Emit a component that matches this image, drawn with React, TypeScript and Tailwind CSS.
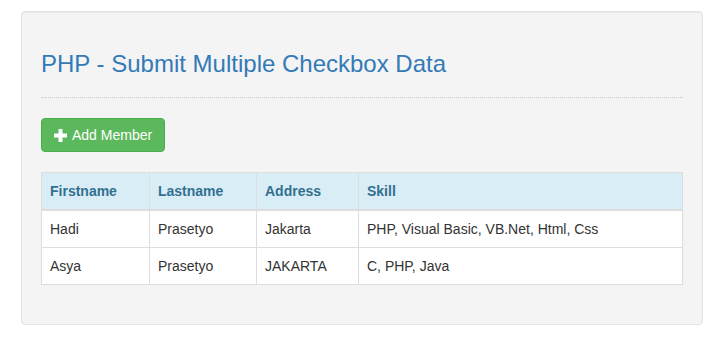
export default function App() {
  const rows = [
    ["Hadi", "Prasetyo", "Jakarta", "PHP, Visual Basic, VB.Net, Html, Css"],
    ["Asya", "Prasetyo", "JAKARTA", "C, PHP, Java"],
  ];
  return (
    <div className="bg-white min-h-[340px] pt-[11px] pl-[21px]" style={{ fontFamily: '"Liberation Sans", Arial, sans-serif' }}>
      <div className="w-[682px] bg-[#f4f4f4] border border-[#e3e3e3] rounded-[4px] p-[19px] shadow-[inset_0_1px_1px_rgba(0,0,0,0.05)] text-[14px] text-[#333] leading-[20px]">
        <h3 className="mt-[20px] text-[24px] leading-[26.4px] text-[#337ab7] font-normal">PHP - Submit Multiple Checkbox Data</h3>
        <hr className="mt-[20px] mb-[20px] border-0 border-t border-dotted border-[#c8c8c8]" />
        <button className="flex items-center h-[34px] px-[12px] bg-[#5cb85c] border border-[#4cae4c] rounded-[4px] text-white text-[14px]">
          <svg width="13" height="13" viewBox="0 0 13 13" className="mr-[5px]">
            <rect x="0" y="4.5" width="13" height="4" fill="#fff" />
            <rect x="4.5" y="0" width="4" height="13" fill="#fff" />
          </svg>
          Add Member
        </button>
        <table className="mt-[20px] mb-[20px] w-[642px] border-collapse border border-[#ddd] bg-white table-fixed">
          <thead>
            <tr className="bg-[#d9edf7] text-[#31708f]">
              <th className="w-[108px] text-left font-bold p-[8px] border border-[#ddd] border-b-2">Firstname</th>
              <th className="w-[107px] text-left font-bold p-[8px] border border-[#ddd] border-b-2">Lastname</th>
              <th className="w-[102px] text-left font-bold p-[8px] border border-[#ddd] border-b-2">Address</th>
              <th className="text-left font-bold p-[8px] border border-[#ddd] border-b-2">Skill</th>
            </tr>
          </thead>
          <tbody>
            {rows.map((r, i) => (
              <tr key={i}>
                {r.map((c, j) => (
                  <td key={j} className="p-[8px] border border-[#ddd]">{c}</td>
                ))}
              </tr>
            ))}
          </tbody>
        </table>
      </div>
    </div>
  );
}
